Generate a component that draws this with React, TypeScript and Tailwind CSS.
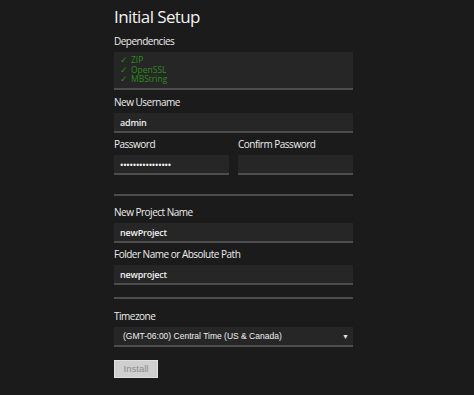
import { useState } from "react";

const labelCls = "block text-[10px] leading-[14px] tracking-[-0.5px] font-medium text-[#ededed]";
const inputCls =
  "block w-full h-[20px] bg-[#262626] border-b-2 border-[#4d4d4d] px-[6px] text-[9px] font-semibold tracking-[-0.2px] text-[#f0f0f0] outline-none";

function Field({
  label,
  value,
  type = "text",
  className = "",
}: {
  label: string;
  value: string;
  type?: string;
  className?: string;
}) {
  const [v, setV] = useState(value);
  return (
    <div className={className}>
      <label className={labelCls}>{label}</label>
      <input
        type={type}
        value={v}
        onChange={(e) => setV(e.target.value)}
        className={inputCls + " mt-[4px]"}
      />
    </div>
  );
}

export default function App() {
  const deps = ["ZIP", "OpenSSL", "MBString"];
  return (
    <div
      className="w-[474px] h-[395px] bg-[#1b1b1b] overflow-hidden"
      style={{ fontFamily: '"Open Sans", "Noto Sans", sans-serif' }}
    >
      <div className="ml-[114px] w-[239px] pt-[5px]">
        <h1 className="text-[17px] leading-[24px] tracking-[-0.6px] font-medium text-[#f2f2f2]">
          Initial Setup
        </h1>

        <div className="mt-[5px]">
          <div className={labelCls}>Dependencies</div>
          <ul className="mt-[4px] h-[38px] bg-[#262626] border-b-2 border-[#4d4d4d] pt-[3px] pl-[6px]">
            {deps.map((d) => (
              <li key={d} className="flex items-center text-[8.5px] leading-[9.5px] text-[#2b8c1c]">
                <span className="w-[11px]">✓</span>
                {d}
              </li>
            ))}
          </ul>
        </div>

        <Field label="New Username" value="admin" className="mt-[5px]" />

        <div className="mt-[4px] flex gap-[9px]">
          <Field label="Password" value="passwordpassword" type="password" className="flex-1" />
          <Field label="Confirm Password" value="" type="password" className="flex-1" />
        </div>

        <hr className="mt-[19px] border-t-2 border-[#4d4d4d]" />

        <Field label="New Project Name" value="newProject" className="mt-[9px]" />
        <Field label="Folder Name or Absolute Path" value="newproject" className="mt-[4px]" />

        <hr className="mt-[12px] border-t-2 border-[#4d4d4d]" />

        <div className="mt-[10px]">
          <label className={labelCls}>Timezone</label>
          <div className="relative mt-[4px] h-[20px] bg-[#262626] border-b-2 border-[#4d4d4d] flex items-center px-[9px]">
            <span
              className="text-[8.5px] text-[#f0f0f0]"
              style={{ fontFamily: '"Liberation Sans", Arial, sans-serif' }}
            >
              (GMT-06:00) Central Time (US &amp; Canada)
            </span>
            <span className="absolute right-[4px] top-[5px] text-[7px] text-[#e0e0e0]">▼</span>
          </div>
        </div>

        <button
          className="mt-[13px] w-[44px] h-[18px] bg-[#cfcfcf] border border-[#e0e0e0] text-[9.5px] text-[#8c8c8c]"
          style={{ fontFamily: '"Liberation Sans", Arial, sans-serif' }}
        >
          Install
        </button>
      </div>
    </div>
  );
}
